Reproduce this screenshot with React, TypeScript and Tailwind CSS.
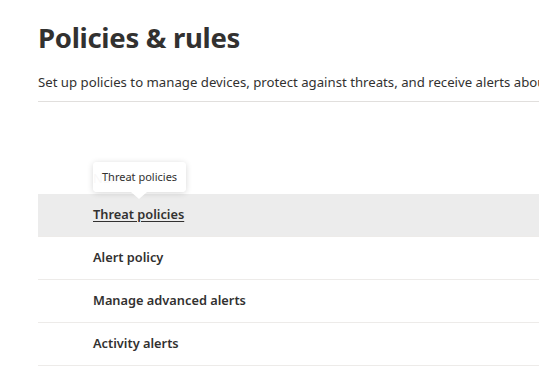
export default function App() {
  const rows = ['Threat policies', 'Alert policy', 'Manage advanced alerts', 'Activity alerts']

  return (
    <div className="h-[389px] w-[539px] overflow-hidden bg-white text-[#323130]" style={{ fontFamily: '"Noto Sans", "Open Sans", sans-serif' }}>
      <div className="w-[800px] pl-[38px]">
        <h1 className="pt-[20px] text-[27.5px] font-bold leading-[36px] tracking-[-0.3px]">Policies &amp; rules</h1>
        <p className="mt-[16px] whitespace-nowrap text-[13.2px] leading-[20px]">
          Set up policies to manage devices, protect against threats, and receive alerts about various activities in your organization.
        </p>
        <div className="mt-[9px] border-t border-[#e1dfdd]" />

        <div className="relative mt-[60px]">
          <div className="h-[32px] pl-[55px] text-[13px] leading-[32px] text-[#d2cccc]">Name</div>

          <div className="absolute left-[55px] top-[0px] z-10 rounded-sm bg-white/85 px-[9px] py-[6px] text-[11px] leading-[18px] text-[#323130] shadow-[0_1px_6px_rgba(0,0,0,0.16)]">
            Threat policies
            <span className="absolute bottom-[-7px] left-[38px] h-0 w-0 border-x-[8px] border-t-[7px] border-x-transparent border-t-white" />
          </div>

          {rows.map((r, i) => (
            <div
              key={r}
              className={`flex h-[43px] items-center border-b border-[#edebe9] pl-[55px] text-[12.8px] font-semibold ${i === 0 ? 'bg-[#ececec]' : ''}`}
            >
              <span className={i === 0 ? 'underline underline-offset-2' : ''}>{r}</span>
            </div>
          ))}
        </div>
      </div>
    </div>
  )
}
